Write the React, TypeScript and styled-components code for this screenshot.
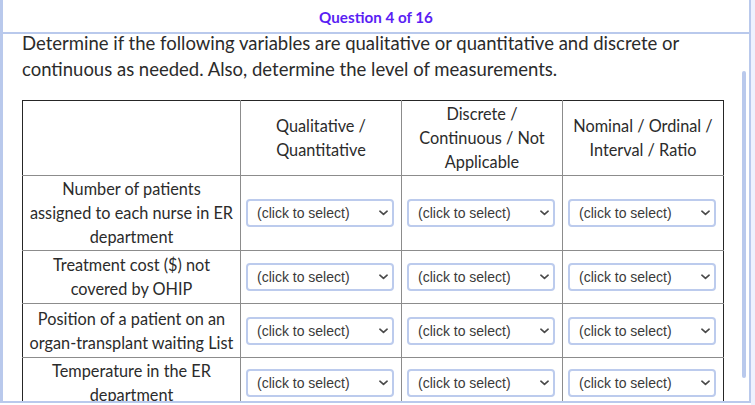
import React from "react";
import styled, { createGlobalStyle } from "styled-components";

const GlobalStyle = createGlobalStyle`
  html, body {
    margin: 0;
    padding: 0;
    background: #ffffff;
  }
`;

const columns = [
  "Qualitative / Quantitative",
  "Discrete / Continuous / Not Applicable",
  "Nominal / Ordinal / Interval / Ratio",
];

const variables = [
  { label: "Number of patients\nassigned to each nurse in ER department", height: 75 },
  { label: "Treatment cost ($) not covered by OHIP", height: 53 },
  { label: "Position of a patient on an organ-transplant waiting List", height: 54 },
  { label: "Temperature in the ER department", height: 50 },
];

const Dropdown: React.FC = () => (
  <PickerWrap>
    <Picker defaultValue="">
      <option value="">(click to select)</option>
    </Picker>
    <Chevron viewBox="0 0 10 6" aria-hidden="true">
      <path d="M1 1l4 3.6L9 1" />
    </Chevron>
  </PickerWrap>
);

const App: React.FC = () => {
  return (
    <>
      <GlobalStyle />
      <Page>
        <Panel>
          <Header>Question 4 of 16</Header>
          <Content>
            <Prompt>
              Determine if the following variables are qualitative or quantitative and discrete or
              continuous as needed. Also, determine the level of measurements.
            </Prompt>
            <Grid>
              <colgroup>
                <col style={{ width: 218 }} />
                <col style={{ width: 161 }} />
                <col style={{ width: 161 }} />
                <col style={{ width: 161 }} />
              </colgroup>
              <thead>
                <Row $height={75}>
                  <HeadCell />
                  {columns.map((c) => (
                    <HeadCell key={c}>{c}</HeadCell>
                  ))}
                </Row>
              </thead>
              <tbody>
                {variables.map((v) => (
                  <Row key={v.label} $height={v.height}>
                    <LabelCell>{v.label}</LabelCell>
                    {columns.map((c) => (
                      <SelectCell key={c}>
                        <Dropdown />
                      </SelectCell>
                    ))}
                  </Row>
                ))}
              </tbody>
            </Grid>
            <Thumb />
          </Content>
        </Panel>
        <Strip />
      </Page>
    </>
  );
};

export default App;

const Page = styled.div`
  display: flex;
  width: 755px;
  height: 405px;
  overflow: hidden;
`;

const Panel = styled.div`
  display: flex;
  flex-direction: column;
  width: 751px;
  height: 403px;
  box-sizing: border-box;
  overflow: hidden;
  border-left: 3px solid #b9c9ec;
  border-right: 2px solid #b9c9ec;
  border-bottom: 2px solid #b9c9ec;
`;

const Strip = styled.div`
  width: 4px;
  height: 405px;
  background: #eef2fd;
`;

const Header = styled.div`
  display: flex;
  align-items: center;
  justify-content: center;
  flex: none;
  height: 34px;
  box-sizing: border-box;
  padding-top: 1px;
  border-bottom: 2px solid #b9c9ec;
  font-family: Lato, "Open Sans", sans-serif;
  font-weight: 700;
  font-size: 15.2px;
  color: #5a1ef4;
`;

const Content = styled.div`
  position: relative;
  flex: 1;
  min-height: 0;
  padding-left: 19px;
`;

const Prompt = styled.p`
  margin: -4px 0 18px;
  font-family: Lato, "Open Sans", sans-serif;
  font-size: 18.5px;
  line-height: 26px;
  color: #2b2b2b;
`;

const Grid = styled.table`
  border-collapse: collapse;
  table-layout: fixed;
  width: 701px;
  font-family: Lato, "Open Sans", sans-serif;
  font-size: 16.3px;
  line-height: 24px;
  color: #2b2b2b;

  tr:first-child > * {
    border-top-color: #262626;
  }
  tr > *:first-child {
    border-left-color: #262626;
  }
  tr > *:last-child {
    border-right-color: #262626;
  }
`;

const Row = styled.tr<{ $height: number }>`
  height: ${(p) => p.$height}px;
`;

const HeadCell = styled.th`
  border: 1px solid #8c8c8c;
  padding: 0 6px;
  font-weight: 400;
  text-align: center;
  vertical-align: middle;
`;

const LabelCell = styled.td`
  border: 1px solid #8c8c8c;
  padding: 0 3px;
  text-align: center;
  vertical-align: middle;
  white-space: pre-line;
`;

const SelectCell = styled.td`
  border: 1px solid #8c8c8c;
  padding: 0 7px 0 5px;
  vertical-align: middle;
`;

const PickerWrap = styled.div`
  position: relative;
  width: 148px;
  height: 28px;
`;

const Picker = styled.select`
  appearance: none;
  display: block;
  width: 100%;
  height: 100%;
  box-sizing: border-box;
  border: 2px solid #bccbed;
  border-radius: 4px;
  background: #ffffff;
  padding: 0 22px 0 9px;
  font-family: "Liberation Sans", Arial, sans-serif;
  font-size: 14px;
  color: #3a3a3a;
`;

const Chevron = styled.svg`
  position: absolute;
  right: 6px;
  top: 11px;
  width: 9px;
  height: 6px;
  fill: none;
  stroke: #4a4a4a;
  stroke-width: 1.8;
  stroke-linecap: round;
  stroke-linejoin: round;
  pointer-events: none;
`;

const Thumb = styled.div`
  position: absolute;
  right: 3px;
  top: 37px;
  width: 4px;
  height: 307px;
  border-radius: 2px;
  background: #b9c9ec;
`;
